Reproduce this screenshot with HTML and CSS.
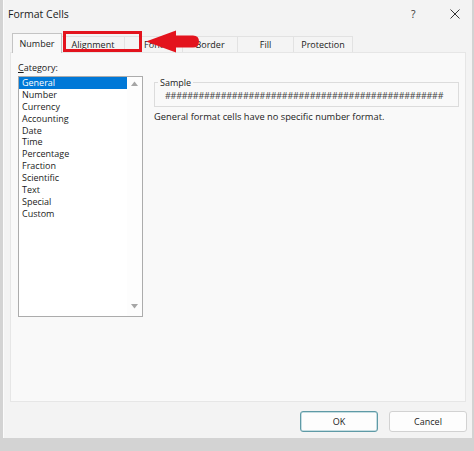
FILE: index.html
```html
<!DOCTYPE html>
<html>
<head>
<meta charset="utf-8">
<link rel="stylesheet" href="styles.css">
</head>
<body>
<div class="dialog">
  <div class="titlebar">
    <span class="title">Format Cells</span>
    <span class="help">?</span>
    <span class="close">
      <svg width="10" height="10" viewBox="0 0 10 10"><path d="M0.5 0.5 L9.5 9.5 M9.5 0.5 L0.5 9.5" stroke="#333" stroke-width="1"/></svg>
    </span>
  </div>
  <div class="tabs">
    <div class="tab active t-number">Number</div>
    <div class="tab t-align">Alignment</div>
    <div class="tab t-font">Font</div>
    <div class="tab t-border">Border</div>
    <div class="tab t-fill">Fill</div>
    <div class="tab t-prot">Protection</div>
  </div>
  <div class="panel">
    <div class="left">
      <div class="label"><u>C</u>ategory:</div>
      <div class="list">
        <div class="items">
          <div class="item selected">General</div>
          <div class="item">Number</div>
          <div class="item">Currency</div>
          <div class="item">Accounting</div>
          <div class="item">Date</div>
          <div class="item">Time</div>
          <div class="item">Percentage</div>
          <div class="item">Fraction</div>
          <div class="item">Scientific</div>
          <div class="item">Text</div>
          <div class="item">Special</div>
          <div class="item">Custom</div>
        </div>
        <div class="scrollbar">
          <svg width="7" height="5" viewBox="0 0 7 5"><path d="M0 5 L3.5 0.5 L7 5 Z" fill="#a6a6a6"/></svg>
          <svg width="7" height="5" viewBox="0 0 7 5"><path d="M0 0 L3.5 4.5 L7 0 Z" fill="#a6a6a6"/></svg>
        </div>
      </div>
    </div>
    <div class="right">
      <fieldset class="sample">
        <legend>Sample</legend>
        <div class="hashes">##################################################</div>
      </fieldset>
      <div class="desc">General format cells have no specific number format.</div>
    </div>
  </div>
  <div class="footer">
    <button class="btn primary">OK</button>
    <button class="btn">Cancel</button>
  </div>
  <div class="annot-box"></div>
  <svg class="annot-arrow" width="54" height="24" viewBox="0 0 54 24">
    <path d="M0 11.5 L30 0.5 L30 5.5 L47 5.5 Q53 5.5 53 11.5 Q53 17.5 47 17.5 L30 17.5 L30 22.5 Z" fill="#e3131d"/>
  </svg>
</div>
</body>
</html>
```
FILE: styles.css
```css
html, body {
  margin: 0;
  padding: 0;
}
body {
  width: 474px;
  height: 451px;
  overflow: hidden;
  background: #d3d3d3;
  font-family: "Open Sans", "Noto Sans", sans-serif;
  color: #1b1b1b;
}
.dialog {
  position: relative;
  margin-left: 3px;
  width: 469px;
  height: 438px;
  background: #f3f3f3;
  border-left: 1px solid #fbfbfb;
  box-sizing: border-box;
  display: flex;
  flex-direction: column;
}
.titlebar {
  height: 28px;
  display: flex;
  align-items: center;
  padding-left: 4px;
}
.title {
  font-size: 10.5px;
}
.help {
  margin-left: auto;
  font-size: 10.5px;
  color: #333;
  width: 10px;
}
.close {
  margin-left: 29px;
  margin-right: 12px;
  display: flex;
}
.tabs {
  margin-top: 5px;
  padding-left: 8px;
  height: 19px;
  display: flex;
  align-items: flex-end;
  font-size: 9px;
  position: relative;
  z-index: 1;
}
.tab {
  height: 16px;
  box-sizing: border-box;
  display: flex;
  align-items: center;
  justify-content: center;
  border-top: 1px solid #e2e2e2;
  border-right: 1px solid #e2e2e2;
  background: #f4f4f4;
}
.tab.active {
  height: 20px;
  margin-bottom: -1px;
  background: #f9f9f9;
  border: 1px solid #c4c4c4;
  border-bottom: none;
}
.t-number { width: 50px; }
.t-align { width: 63px; }
.t-font { width: 58px; }
.t-border { width: 55px; }
.t-fill { width: 56px; }
.t-prot { width: 59px; }
.panel {
  margin: 0 6px;
  height: 350px;
  box-sizing: border-box;
  background: #f9f9f9;
  border: 1px solid #e6e6e6;
  display: grid;
  grid-template-columns: 125px minmax(0, 1fr);
  column-gap: 11px;
  padding: 8px 6px 0 7px;
  font-size: 9px;
}
.label {
  height: 15px;
  line-height: 14px;
}
.list {
  height: 241px;
  box-sizing: border-box;
  border: 1px solid #acacac;
  background: #fff;
  display: flex;
}
.items {
  flex: 1;
}
.item {
  height: 11.9px;
  line-height: 12px;
  padding-left: 3px;
}
.item.selected {
  background: #0078d7;
  color: #fff;
}
.scrollbar {
  width: 15px;
  background: #fdfdfd;
  display: flex;
  flex-direction: column;
  justify-content: space-between;
  align-items: center;
  padding: 4px 0 7px;
}
.right {
  padding-top: 15px;
  min-width: 0;
}
.sample {
  margin: 0;
  min-width: 0;
  border: 1px solid #dcdcdc;
  padding: 0 0 3px 3px;
}
.sample legend {
  padding: 0 2px;
  line-height: 13px;
}
.hashes {
  padding-left: 7px;
  line-height: 14px;
  color: #444;
  font-size: 9px;
  letter-spacing: -0.25px;
  white-space: nowrap;
  overflow: hidden;
}
.desc {
  margin-top: 3px;
  line-height: 14px;
  font-size: 9.3px;
}
.footer {
  display: flex;
  justify-content: flex-end;
  gap: 11px;
  padding: 9px 5px 0 0;
}
.btn {
  width: 78px;
  height: 21px;
  margin: 0;
  box-sizing: border-box;
  background: #fdfdfd;
  border: 1px solid #d2d2d2;
  border-radius: 3px;
  font-family: "Open Sans", "Noto Sans", sans-serif;
  font-size: 9px;
  color: #1b1b1b;
  padding: 0;
}
.btn.primary {
  border: 1px solid #5f9aa6;
  box-shadow: inset 0 0 0 0.5px #8fbfc8;
}
.annot-box {
  position: absolute;
  z-index: 5;
  left: 59px;
  top: 31px;
  width: 79px;
  height: 21px;
  box-sizing: border-box;
  border: 3px solid #e3131d;
}
.annot-arrow {
  position: absolute;
  z-index: 5;
  left: 142px;
  top: 30px;
}
```
